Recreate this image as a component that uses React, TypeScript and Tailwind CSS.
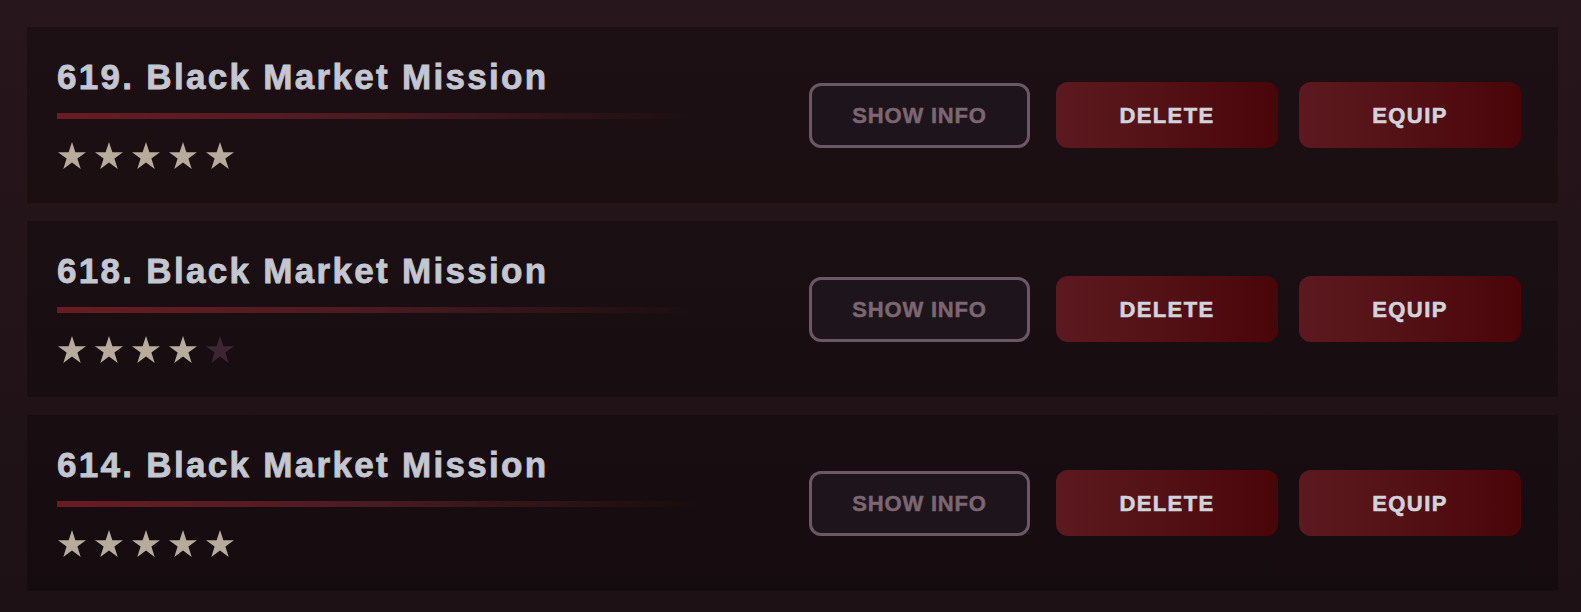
import React from "react";

const missions = [
  { id: 619, name: "Black Market Mission", stars: 5 },
  { id: 618, name: "Black Market Mission", stars: 4 },
  { id: 614, name: "Black Market Mission", stars: 5 },
];

function Star({ filled }: { filled: boolean }) {
  return (
    <svg width="30" height="30" viewBox="0 0 30 30" className="block">
      <polygon
        points="15,1 18.4,11.2 29,11.2 20.4,17.5 23.7,28 15,21.6 6.3,28 9.6,17.5 1,11.2 11.6,11.2"
        fill={filled ? "#b7ab9c" : "#3a2731"}
      />
    </svg>
  );
}

function Card({ id, name, stars }: { id: number; name: string; stars: number }) {
  return (
    <div className="flex h-[176px] items-center justify-between bg-black/25 pl-[30px] pr-[37px]">
      <div className="flex flex-col self-start pt-[29px]">
        <div className="text-[35px] font-bold leading-[42px] tracking-[2.3px] text-[#c4c7d0] [-webkit-text-stroke:0.8px_#c4c7d0]">
          {id}. {name}
        </div>
        <div className="mt-[15px] h-[6px] w-[640px] bg-gradient-to-r from-[#6a1b23] via-[#4a1a20] to-transparent" />
        <div className="mt-[22px] flex gap-[7px]">
          {[0, 1, 2, 3, 4].map((i) => (
            <Star key={i} filled={i < stars} />
          ))}
        </div>
      </div>
      <div className="flex items-center">
        <button className="mr-[26px] flex h-[65px] w-[221px] items-center justify-center rounded-[12px] border-[3px] border-[#6c5764] bg-[#1e141b] text-[22px] font-bold tracking-[0.8px] text-[#7b6672] [-webkit-text-stroke:0.5px_#7b6672]">
          SHOW INFO
        </button>
        <button className="mr-[21px] flex h-[66px] w-[222px] items-center justify-center rounded-[12px] bg-gradient-to-r from-[#5c1a20] to-[#4a0509] text-[22px] font-bold tracking-[1.4px] text-[#d2d4dc] [-webkit-text-stroke:0.6px_#d2d4dc]">
          DELETE
        </button>
        <button className="flex h-[66px] w-[222px] items-center justify-center rounded-[12px] bg-gradient-to-r from-[#5c1a20] to-[#4a0509] text-[22px] font-bold tracking-[1.4px] text-[#d2d4dc] [-webkit-text-stroke:0.6px_#d2d4dc]">
          EQUIP
        </button>
      </div>
    </div>
  );
}

export default function App() {
  return (
    <div
      className="h-[612px] w-full bg-gradient-to-b from-[#27161b] to-[#1d1115] pl-[27px] pr-[23px] pt-[27px]"
      style={{ fontFamily: '"Liberation Sans", Arial, sans-serif' }}
    >
      <div className="flex flex-col gap-[18px]">
        {missions.map((m) => (
          <Card key={m.id} {...m} />
        ))}
      </div>
    </div>
  );
}
